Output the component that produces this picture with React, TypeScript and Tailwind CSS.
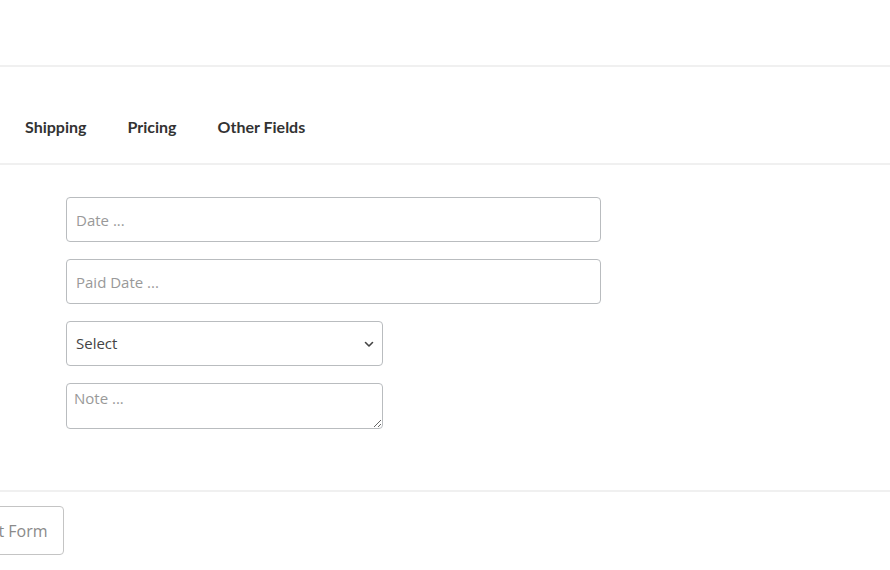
import React from "react";

export default function App() {
  const inputCls =
    "block h-[45px] rounded-[4px] border border-[#b9bcbf] bg-white px-[9px] text-[15px] text-[#555] placeholder:text-[#999] outline-none";
  return (
    <div
      className="w-[890px] h-[570px] overflow-hidden bg-white"
      style={{ fontFamily: '"Open Sans", "Liberation Sans", sans-serif' }}
    >
      <div className="h-[65px]" />
      <div className="h-[100px] border-t-2 border-b-2 border-[#f0f0f0] flex items-center">
        <div
          className="flex items-center pl-[25px] pt-[24px] text-[16px] font-bold text-[#333]"
          style={{ fontFamily: 'Lato, "Liberation Sans", sans-serif' }}
        >
          <span>Shipping</span>
          <span className="ml-[41px]">Pricing</span>
          <span className="ml-[41px]">Other Fields</span>
        </div>
      </div>
      <div className="h-[327px] border-b-2 border-[#f0f0f0] pl-[66px] pt-[32px] flex flex-col gap-[17px]">
        <input className={inputCls + " w-[535px]"} placeholder="Date ..." />
        <input className={inputCls + " w-[535px]"} placeholder="Paid Date ..." />
        <div className="relative w-[317px] h-[45px] rounded-[4px] border border-[#b9bcbf] flex items-center px-[9px] text-[15px] text-[#444]">
          <span>Select</span>
          <svg
            className="absolute right-[7px] top-1/2 -translate-y-1/2"
            width="12"
            height="12"
            viewBox="0 0 12 12"
            fill="none"
            stroke="#444"
            strokeWidth="1.6"
            strokeLinecap="round"
            strokeLinejoin="round"
          >
            <path d="M2.5 4.5 6 8l3.5-3.5" />
          </svg>
        </div>
        <textarea
          className="block w-[317px] h-[46px] rounded-[4px] border border-[#b9bcbf] px-[7px] pt-[3px] text-[15px] text-[#555] placeholder:text-[#999] outline-none"
          placeholder="Note ..."
        />
      </div>
      <div className="pt-[14px] flex">
        <button className="ml-[-53px] h-[49px] px-[15px] rounded-[4px] border border-[#c4c4c4] bg-white text-[16px] text-[#8a8a8a]">
          Reset Form
        </button>
      </div>
    </div>
  );
}
